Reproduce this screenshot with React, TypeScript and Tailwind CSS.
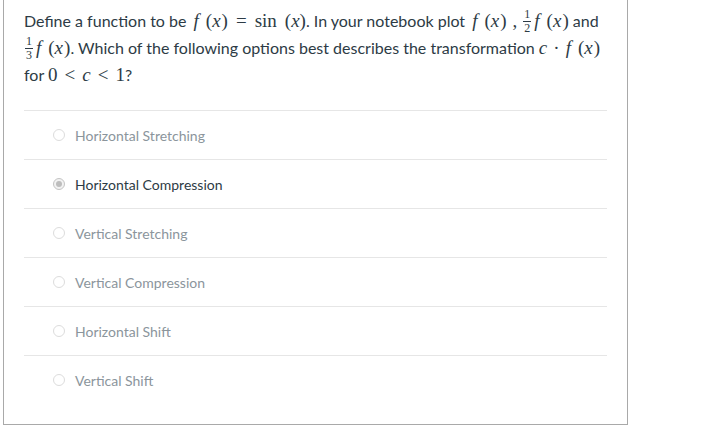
import React from 'react';

const mathFont = { fontFamily: '"Liberation Serif", "DejaVu Serif", serif' };

function V({ children }: { children: React.ReactNode }) {
  return <span className="italic">{children}</span>;
}

function M({ children }: { children: React.ReactNode }) {
  return (
    <span style={mathFont} className="text-[19px]">
      {children}
    </span>
  );
}

function Fx({ lead = false }: { lead?: boolean }) {
  return (
    <M>
      <V>
        <span className={lead ? 'ml-[3px]' : ''}>f</span>
      </V>
      <span className="ml-[7px]">(</span>
      <V>x</V>
      <span className="ml-[1px]">)</span>
    </M>
  );
}

function Frac({ d }: { d: string }) {
  return (
    <span
      style={mathFont}
      className="inline-flex flex-col items-center align-middle text-[12px] leading-[11px] ml-[1px] mr-[3px] -mt-[2px]"
    >
      <span className="border-b border-[#2d3b45] px-[1px] pb-[1px]">1</span>
      <span className="pt-[1px]">{d}</span>
    </span>
  );
}

const options = [
  { label: 'Horizontal Stretching', selected: false },
  { label: 'Horizontal Compression', selected: true },
  { label: 'Vertical Stretching', selected: false },
  { label: 'Vertical Compression', selected: false },
  { label: 'Horizontal Shift', selected: false },
  { label: 'Vertical Shift', selected: false },
];

function Radio({ selected }: { selected: boolean }) {
  if (selected) {
    return (
      <span className="w-[12px] h-[12px] rounded-full border border-[#c4c4c4] bg-[#f2f2f2] flex items-center justify-center">
        <span className="w-[6px] h-[6px] rounded-full bg-[#bdbdbd]" />
      </span>
    );
  }
  return <span className="w-[12px] h-[12px] rounded-full border border-[#dcdcdc] bg-white" />;
}

export default function App() {
  return (
    <div className="w-[701px] h-[444px] bg-white" style={{ fontFamily: 'Lato, "Liberation Sans", sans-serif' }}>
      <div className="ml-[3px] w-[625px] h-[425px] border-l border-r border-b border-[#a9a9a9] px-[20px] pt-[7px]">
        <div className="text-[16px] text-[#2d3b45] whitespace-nowrap">
          <div className="h-[27px] leading-[27px]">
            Define a function to be <Fx lead />
            <M>
              <span className="mx-[8px]">=</span>sin<span className="ml-[8px]">(</span>
              <V>x</V>)
            </M>
            . In your notebook plot <Fx lead />
            <M>
              <span className="ml-[6px] mr-[5px]">,</span>
            </M>
            <Frac d="2" />
            <Fx /> and
          </div>
          <div className="h-[27px] leading-[27px]">
            <Frac d="3" />
            <Fx />. Which of the following options best describes the transformation{' '}
            <M>
              <V>c</V>
              <span className="mx-[6px]">·</span>
            </M>
            <Fx />
          </div>
          <div className="h-[27px] leading-[27px]">
            for{' '}
            <M>
              0<span className="mx-[7px]">&lt;</span>
              <V>c</V>
              <span className="mx-[7px]">&lt;</span>1
            </M>
            ?
          </div>
        </div>
        <div className="mt-[22px]">
          {options.map((o) => (
            <div key={o.label} className="h-[49px] border-t border-[#e6e6e6] flex items-center pl-[29px] gap-[10px]">
              <Radio selected={o.selected} />
              <span className={`text-[14px] ${o.selected ? 'text-[#2d3b45]' : 'text-[#8b959c]'}`}>{o.label}</span>
            </div>
          ))}
        </div>
      </div>
    </div>
  );
}
